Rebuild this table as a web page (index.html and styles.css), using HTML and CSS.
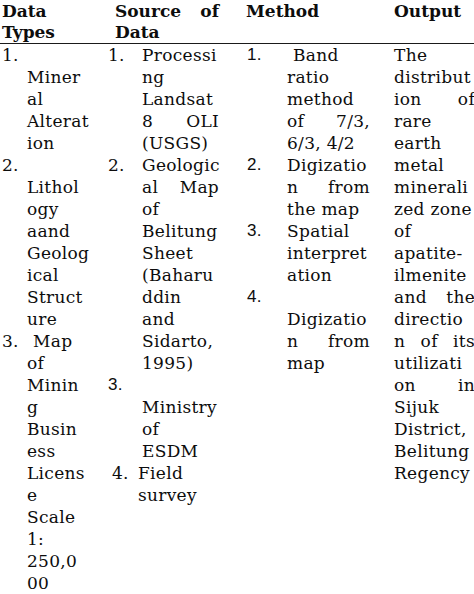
FILE: index.html
```html
<!DOCTYPE html>
<html>
<head>
<meta charset="utf-8">
<link rel="stylesheet" href="styles.css">
</head>
<body>
<div class="table">
  <div class="row head">
    <div class="cell c1">
      <div class="hl">Data</div>
      <div class="hl">Types</div>
    </div>
    <div class="cell c2">
      <div class="hl hs"><span class="hj"><span>Source</span><span>of</span></span></div>
      <div class="hl hs">Data</div>
    </div>
    <div class="cell c3">
      <div class="hl hm">Method</div>
    </div>
    <div class="cell c4">
      <div class="hl ho">Output</div>
    </div>
  </div>

  <div class="row body">
    <div class="cell c1">
      <div class="ln n">1.</div>
      <div class="ln t">Miner</div>
      <div class="ln t">al</div>
      <div class="ln t">Alterat</div>
      <div class="ln t">ion</div>
      <div class="ln n">2.</div>
      <div class="ln t">Lithol</div>
      <div class="ln t">ogy</div>
      <div class="ln t">aand</div>
      <div class="ln t">Geolog</div>
      <div class="ln t">ical</div>
      <div class="ln t">Struct</div>
      <div class="ln t">ure</div>
      <div class="ln n"><span class="num">3.</span><span class="sp">Map</span></div>
      <div class="ln t">of</div>
      <div class="ln t">Minin</div>
      <div class="ln t">g</div>
      <div class="ln t">Busin</div>
      <div class="ln t">ess</div>
      <div class="ln t">Licens</div>
      <div class="ln t">e</div>
      <div class="ln t">Scale</div>
      <div class="ln t">1:</div>
      <div class="ln t">250,0</div>
      <div class="ln t">00</div>
    </div>

    <div class="cell c2">
      <div class="ln n"><span class="num">1.</span><span>Processi</span></div>
      <div class="ln t">ng</div>
      <div class="ln t">Landsat</div>
      <div class="ln t"><span class="j"><span>8</span><span>OLI</span></span></div>
      <div class="ln t">(USGS)</div>
      <div class="ln n"><span class="num">2.</span><span>Geologic</span></div>
      <div class="ln t"><span class="j"><span>al</span><span>Map</span></span></div>
      <div class="ln t">of</div>
      <div class="ln t">Belitung</div>
      <div class="ln t">Sheet</div>
      <div class="ln t">(Baharu</div>
      <div class="ln t">ddin</div>
      <div class="ln t">and</div>
      <div class="ln t">Sidarto,</div>
      <div class="ln t">1995)</div>
      <div class="ln n"><span class="num sans">3.</span></div>
      <div class="ln t">Ministry</div>
      <div class="ln t">of</div>
      <div class="ln t">ESDM</div>
      <div class="ln n4"><span class="num4">4.</span><span>Field</span></div>
      <div class="ln t4">survey</div>
    </div>

    <div class="cell c3">
      <div class="ln n"><span class="num sans">1.</span><span class="sp">Band</span></div>
      <div class="ln t">ratio</div>
      <div class="ln t">method</div>
      <div class="ln t"><span class="j"><span>of</span><span>7/3,</span></span></div>
      <div class="ln t">6/3, 4/2</div>
      <div class="ln n"><span class="num sans">2.</span><span>Digizatio</span></div>
      <div class="ln t"><span class="j"><span>n</span><span>from</span></span></div>
      <div class="ln t">the map</div>
      <div class="ln n"><span class="num sans">3.</span><span>Spatial</span></div>
      <div class="ln t">interpret</div>
      <div class="ln t">ation</div>
      <div class="ln n"><span class="num sans">4.</span></div>
      <div class="ln t">Digizatio</div>
      <div class="ln t"><span class="j"><span>n</span><span>from</span></span></div>
      <div class="ln t">map</div>
    </div>

    <div class="cell c4">
      <div class="ln t">The</div>
      <div class="ln t">distribut</div>
      <div class="ln t"><span class="j"><span>ion</span><span>of</span></span></div>
      <div class="ln t">rare</div>
      <div class="ln t">earth</div>
      <div class="ln t">metal</div>
      <div class="ln t">minerali</div>
      <div class="ln t">zed zone</div>
      <div class="ln t">of</div>
      <div class="ln t">apatite-</div>
      <div class="ln t">ilmenite</div>
      <div class="ln t"><span class="j"><span>and</span><span>the</span></span></div>
      <div class="ln t">directio</div>
      <div class="ln t"><span class="j"><span>n</span><span>of</span><span>its</span></span></div>
      <div class="ln t">utilizati</div>
      <div class="ln t"><span class="j"><span>on</span><span>in</span></span></div>
      <div class="ln t">Sijuk</div>
      <div class="ln t">District,</div>
      <div class="ln t">Belitung</div>
      <div class="ln t">Regency</div>
    </div>
  </div>
</div>
</body>
</html>
```

FILE: styles.css
```css
html, body {
  margin: 0;
  padding: 0;
  background: #ffffff;
}

body {
  width: 474px;
  height: 594px;
  overflow: hidden;
  font-family: "DejaVu Serif", "Liberation Serif", serif;
  font-size: 17px;
  color: #0d0d0d;
}

.table {
  width: 490px;
}

.row {
  display: grid;
  grid-template-columns: 106px 138px 148px 98px;
}

.head {
  padding-top: 1px;
  border-bottom: 1.5px solid #1a1a1a;
  font-weight: bold;
}

.hl {
  height: 21px;
  line-height: 21px;
  white-space: nowrap;
  display: flex;
}

.c1 .hl { padding-left: 2px; }
.c2 .hs { padding-left: 9px; }
.c3 .hm { padding-left: 2px; }
.c4 .ho { padding-left: 2px; }

.hj {
  display: flex;
  justify-content: space-between;
  width: 104px;
}

.ln {
  height: 22px;
  line-height: 22px;
  white-space: nowrap;
  letter-spacing: 0.3px;
  display: flex;
}

.j {
  display: flex;
  justify-content: space-between;
}

.num {
  display: inline-block;
}

.sans {
  font-family: "Liberation Sans", Arial, sans-serif;
}

.sp {
  padding-left: 6px;
}

/* column 1 */
.c1 .n { padding-left: 2px; }
.c1 .num { width: 25px; }
.c1 .t { padding-left: 27px; }

/* column 2 */
.c2 .n { padding-left: 2px; }
.c2 .num { width: 34px; }
.c2 .t { padding-left: 36px; }
.c2 .j { width: 77px; }
.c2 .n4 { padding-left: 6px; }
.c2 .num4 { width: 26px; display: inline-block; }
.c2 .t4 { padding-left: 32px; }

/* column 3 */
.c3 .n { padding-left: 3px; }
.c3 .num { width: 40px; }
.c3 .t { padding-left: 43px; }
.c3 .j { width: 83px; }

/* column 4 */
.c4 .t { padding-left: 2px; }
.c4 .j { width: 81px; }
```
